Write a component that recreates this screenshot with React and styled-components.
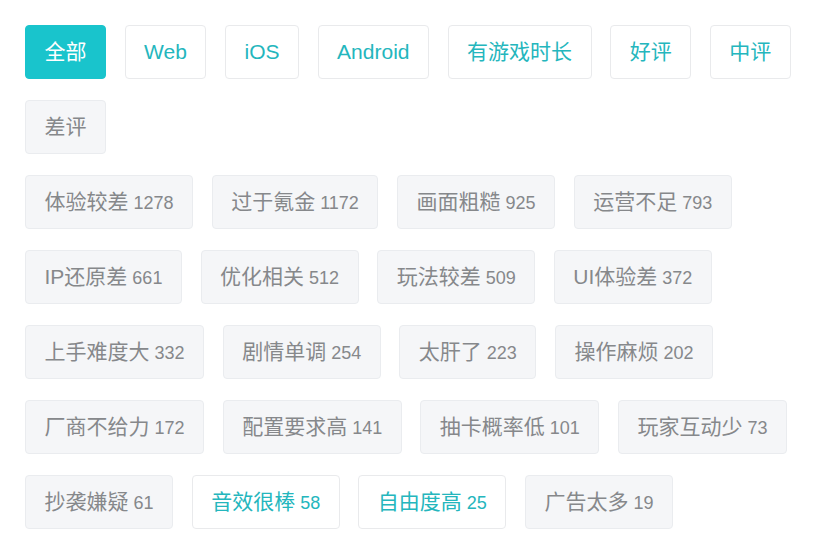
import React, { useState } from "react";
import styled, { createGlobalStyle, css } from "styled-components";

const GlobalStyle = createGlobalStyle`
  body {
    margin: 0;
    background: #ffffff;
    font-family: "Liberation Sans", "Noto Sans CJK SC", sans-serif;
  }
`;

const filters = ["全部", "Web", "iOS", "Android", "有游戏时长", "好评", "中评", "差评"];

const keywords = [
  { name: "体验较差", count: 1278 },
  { name: "过于氪金", count: 1172 },
  { name: "画面粗糙", count: 925 },
  { name: "运营不足", count: 793 },
  { name: "IP还原差", count: 661 },
  { name: "优化相关", count: 512 },
  { name: "玩法较差", count: 509 },
  { name: "UI体验差", count: 372 },
  { name: "上手难度大", count: 332 },
  { name: "剧情单调", count: 254 },
  { name: "太肝了", count: 223 },
  { name: "操作麻烦", count: 202 },
  { name: "厂商不给力", count: 172 },
  { name: "配置要求高", count: 141 },
  { name: "抽卡概率低", count: 101 },
  { name: "玩家互动少", count: 73 },
  { name: "抄袭嫌疑", count: 61 },
  { name: "音效很棒", count: 58, good: true },
  { name: "自由度高", count: 25, good: true },
  { name: "广告太多", count: 19 },
];

const App = () => {
  const [active, setActive] = useState("全部");

  return (
    <>
      <GlobalStyle />
      <Wrapper>
        <TagList>
          {filters.map((f) => (
            <Tag
              key={f}
              $variant={f === active ? "active" : f === "差评" ? "muted" : "outline"}
              onClick={() => setActive(f)}
            >
              {f}
            </Tag>
          ))}
        </TagList>
        <TagList>
          {keywords.map((k) => (
            <Tag key={k.name} $variant={k.good ? "outline" : "muted"}>
              {k.name}
              <Count> {k.count}</Count>
            </Tag>
          ))}
        </TagList>
      </Wrapper>
    </>
  );
};

export default App;

const Wrapper = styled.div`
  padding: 25px 25px 0 25px;
  width: 790px;
  display: flex;
  flex-direction: column;
  gap: 21px;
`;

const TagList = styled.div`
  display: flex;
  flex-wrap: wrap;
  gap: 21px 18.6px;
`;

const variants = {
  active: css`
    background: #19c4cc;
    border-color: #19c4cc;
    color: #ffffff;
  `,
  outline: css`
    background: #ffffff;
    border-color: #e9eaec;
    color: #24b6bd;
  `,
  muted: css`
    background: #f5f6f8;
    border-color: #eaecef;
    color: #86888b;
  `,
};

const Tag = styled.button`
  box-sizing: border-box;
  height: 54px;
  padding: 0 18.5px;
  border: 1px solid;
  border-radius: 4px;
  font-family: inherit;
  font-size: 21px;
  line-height: 52px;
  cursor: pointer;
  white-space: nowrap;
  ${(p) => variants[p.$variant]}
`;

const Count = styled.span`
  font-size: 18px;
`;
